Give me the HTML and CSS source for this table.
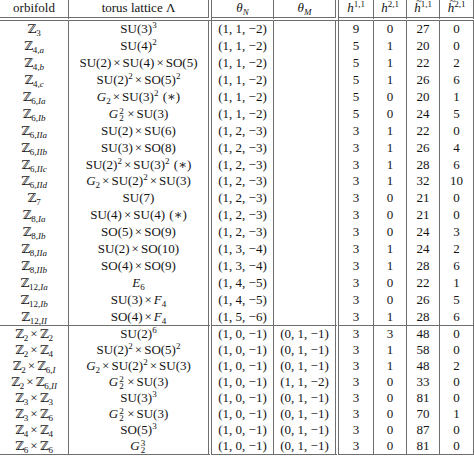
FILE: index.html
```html
<!DOCTYPE html>
<html>
<head>
<meta charset="utf-8">
<link rel="stylesheet" href="styles.css">
</head>
<body>
<table class="orb">
<colgroup>
<col class="w1"><col class="w2"><col class="w3"><col class="w4"><col class="w5"><col class="w6"><col class="w7"><col class="w8">
</colgroup>
<thead>
<tr class="hd">
<th>orbifold</th>
<th>torus lattice Λ</th>
<th><i>θ</i><sub><i>N</i></sub></th>
<th><i>θ</i><sub><i>M</i></sub></th>
<th><i>h</i><sup>1,1</sup></th>
<th><i>h</i><sup>2,1</sup></th>
<th><span class="ht"><i>h</i></span><sup>1,1</sup></th>
<th><span class="ht"><i>h</i></span><sup>2,1</sup></th>
</tr>
</thead>
<tbody class="b1">
<tr><td><span class="bb">ℤ</span><sub>3</sub></td><td>SU(3)<sup>3</sup></td><td>(1, 1, −2)</td><td></td><td>9</td><td>0</td><td>27</td><td>0</td></tr>
<tr><td><span class="bb">ℤ</span><sub>4,<i>a</i></sub></td><td>SU(4)<sup>2</sup></td><td>(1, 1, −2)</td><td></td><td>5</td><td>1</td><td>20</td><td>0</td></tr>
<tr><td><span class="bb">ℤ</span><sub>4,<i>b</i></sub></td><td>SU(2)<span class="x">×</span>SU(4)<span class="x">×</span>SO(5)</td><td>(1, 1, −2)</td><td></td><td>5</td><td>1</td><td>22</td><td>2</td></tr>
<tr><td><span class="bb">ℤ</span><sub>4,<i>c</i></sub></td><td>SU(2)<sup>2</sup><span class="x">×</span>SO(5)<sup>2</sup></td><td>(1, 1, −2)</td><td></td><td>5</td><td>1</td><td>26</td><td>6</td></tr>
<tr><td><span class="bb">ℤ</span><sub>6,<i>Ia</i></sub></td><td><i>G</i><sub>2</sub><span class="x">×</span>SU(3)<sup>2</sup> <span class="st">(∗)</span></td><td>(1, 1, −2)</td><td></td><td>5</td><td>0</td><td>20</td><td>1</td></tr>
<tr><td><span class="bb">ℤ</span><sub>6,<i>Ib</i></sub></td><td><i>G</i><span class="ss"><span class="sp">2</span><span class="sb">2</span></span><span class="x">×</span>SU(3)</td><td>(1, 1, −2)</td><td></td><td>5</td><td>0</td><td>24</td><td>5</td></tr>
<tr><td><span class="bb">ℤ</span><sub>6,<i>IIa</i></sub></td><td>SU(2)<span class="x">×</span>SU(6)</td><td>(1, 2, −3)</td><td></td><td>3</td><td>1</td><td>22</td><td>0</td></tr>
<tr><td><span class="bb">ℤ</span><sub>6,<i>IIb</i></sub></td><td>SU(3)<span class="x">×</span>SO(8)</td><td>(1, 2, −3)</td><td></td><td>3</td><td>1</td><td>26</td><td>4</td></tr>
<tr><td><span class="bb">ℤ</span><sub>6,<i>IIc</i></sub></td><td>SU(2)<sup>2</sup><span class="x">×</span>SU(3)<sup>2</sup> <span class="st">(∗)</span></td><td>(1, 2, −3)</td><td></td><td>3</td><td>1</td><td>28</td><td>6</td></tr>
<tr><td><span class="bb">ℤ</span><sub>6,<i>IId</i></sub></td><td><i>G</i><sub>2</sub><span class="x">×</span>SU(2)<sup>2</sup><span class="x">×</span>SU(3)</td><td>(1, 2, −3)</td><td></td><td>3</td><td>1</td><td>32</td><td>10</td></tr>
<tr><td><span class="bb">ℤ</span><sub>7</sub></td><td>SU(7)</td><td>(1, 2, −3)</td><td></td><td>3</td><td>0</td><td>21</td><td>0</td></tr>
<tr><td><span class="bb">ℤ</span><sub>8,<i>Ia</i></sub></td><td>SU(4)<span class="x">×</span>SU(4) <span class="st">(∗)</span></td><td>(1, 2, −3)</td><td></td><td>3</td><td>0</td><td>21</td><td>0</td></tr>
<tr><td><span class="bb">ℤ</span><sub>8,<i>Ib</i></sub></td><td>SO(5)<span class="x">×</span>SO(9)</td><td>(1, 2, −3)</td><td></td><td>3</td><td>0</td><td>24</td><td>3</td></tr>
<tr><td><span class="bb">ℤ</span><sub>8,<i>IIa</i></sub></td><td>SU(2)<span class="x">×</span>SO(10)</td><td>(1, 3, −4)</td><td></td><td>3</td><td>1</td><td>24</td><td>2</td></tr>
<tr><td><span class="bb">ℤ</span><sub>8,<i>IIb</i></sub></td><td>SO(4)<span class="x">×</span>SO(9)</td><td>(1, 3, −4)</td><td></td><td>3</td><td>1</td><td>28</td><td>6</td></tr>
<tr><td><span class="bb">ℤ</span><sub>12,<i>Ia</i></sub></td><td><i>E</i><sub>6</sub></td><td>(1, 4, −5)</td><td></td><td>3</td><td>0</td><td>22</td><td>1</td></tr>
<tr><td><span class="bb">ℤ</span><sub>12,<i>Ib</i></sub></td><td>SU(3)<span class="x">×</span><i>F</i><sub>4</sub></td><td>(1, 4, −5)</td><td></td><td>3</td><td>0</td><td>26</td><td>5</td></tr>
<tr class="last"><td><span class="bb">ℤ</span><sub>12,<i>II</i></sub></td><td>SO(4)<span class="x">×</span><i>F</i><sub>4</sub></td><td>(1, 5, −6)</td><td></td><td>3</td><td>1</td><td>28</td><td>6</td></tr>
</tbody>
<tbody class="b2">
<tr><td><span class="bb">ℤ</span><sub>2</sub><span class="x">×</span><span class="bb">ℤ</span><sub>2</sub></td><td>SU(2)<sup>6</sup></td><td>(1, 0, −1)</td><td>(0, 1, −1)</td><td>3</td><td>3</td><td>48</td><td>0</td></tr>
<tr><td><span class="bb">ℤ</span><sub>2</sub><span class="x">×</span><span class="bb">ℤ</span><sub>4</sub></td><td>SU(2)<sup>2</sup><span class="x">×</span>SO(5)<sup>2</sup></td><td>(1, 0, −1)</td><td>(0, 1, −1)</td><td>3</td><td>1</td><td>58</td><td>0</td></tr>
<tr><td><span class="bb">ℤ</span><sub>2</sub><span class="x">×</span><span class="bb">ℤ</span><sub>6,<i>I</i></sub></td><td><i>G</i><sub>2</sub><span class="x">×</span>SU(2)<sup>2</sup><span class="x">×</span>SU(3)</td><td>(1, 0, −1)</td><td>(0, 1, −1)</td><td>3</td><td>1</td><td>48</td><td>2</td></tr>
<tr><td><span class="bb">ℤ</span><sub>2</sub><span class="x">×</span><span class="bb">ℤ</span><sub>6,<i>II</i></sub></td><td><i>G</i><span class="ss"><span class="sp">2</span><span class="sb">2</span></span><span class="x">×</span>SU(3)</td><td>(1, 0, −1)</td><td>(1, 1, −2)</td><td>3</td><td>0</td><td>33</td><td>0</td></tr>
<tr><td><span class="bb">ℤ</span><sub>3</sub><span class="x">×</span><span class="bb">ℤ</span><sub>3</sub></td><td>SU(3)<sup>3</sup></td><td>(1, 0, −1)</td><td>(0, 1, −1)</td><td>3</td><td>0</td><td>81</td><td>0</td></tr>
<tr><td><span class="bb">ℤ</span><sub>3</sub><span class="x">×</span><span class="bb">ℤ</span><sub>6</sub></td><td><i>G</i><span class="ss"><span class="sp">2</span><span class="sb">2</span></span><span class="x">×</span>SU(3)</td><td>(1, 0, −1)</td><td>(0, 1, −1)</td><td>3</td><td>0</td><td>70</td><td>1</td></tr>
<tr><td><span class="bb">ℤ</span><sub>4</sub><span class="x">×</span><span class="bb">ℤ</span><sub>4</sub></td><td>SO(5)<sup>3</sup></td><td>(1, 0, −1)</td><td>(0, 1, −1)</td><td>3</td><td>0</td><td>87</td><td>0</td></tr>
<tr class="last"><td><span class="bb">ℤ</span><sub>6</sub><span class="x">×</span><span class="bb">ℤ</span><sub>6</sub></td><td><i>G</i><span class="ss"><span class="sp">3</span><span class="sb">2</span></span></td><td>(1, 0, −1)</td><td>(0, 1, −1)</td><td>3</td><td>0</td><td>81</td><td>0</td></tr>
</tbody>
</table>
</body>
</html>
```
FILE: styles.css
```css
html, body {
  margin: 0;
  padding: 0;
  background: #ffffff;
}
.orb {
  table-layout: fixed;
  width: 474px;
  border-collapse: separate;
  border-spacing: 0;
  font-family: "Liberation Serif", "DejaVu Serif", serif;
  font-size: 13px;
  color: #141414;
}
.w1 { width: 69px; }
.w2 { width: 143px; }
.w3 { width: 62px; }
.w4 { width: 65px; }
.w5 { width: 35px; }
.w6 { width: 33px; }
.w7 { width: 33px; }
.w8 { width: 34px; }
.orb th, .orb td {
  box-sizing: border-box;
  padding: 0;
  text-align: center;
  vertical-align: middle;
  white-space: nowrap;
  line-height: 12px;
  font-weight: normal;
  border-right: 1px solid #6e6e6e;
}
.orb th:nth-child(2), .orb td:nth-child(2),
.orb th:nth-child(4), .orb td:nth-child(4) {
  border-right: 4px double #6e6e6e;
}
.orb th {
  height: 21px;
  padding-bottom: 1px;
  border-bottom: 4px double #6e6e6e;
}
.b1 td { height: 16.9px; }
.b1 .last td { height: 17.9px; border-bottom: 1px solid #6e6e6e; }
.b2 td { height: 16px; }
.b2 .last td { height: 17px; border-bottom: 1px solid #6e6e6e; }
.bb {
  font-family: "DejaVu Serif", serif;
  font-size: 12px;
  line-height: 0;
  font-weight: normal;
}
.orb sub, .orb sup {
  font-size: 9px;
  line-height: 0;
}
.orb sub { vertical-align: -3px; }
.orb sup { vertical-align: 5px; }
.x { margin: 0 2px; }
.st { margin-left: 1px; }
.ss {
  position: relative;
  display: inline-block;
  width: 6px;
  height: 1px;
  margin-left: 1px;
  font-size: 9px;
  line-height: 9px;
}
.sp, .sb {
  position: absolute;
  left: 0;
}
.sp { top: -10px; }
.sb { top: -3px; }
.ht {
  position: relative;
  display: inline-block;
}
.ht::after {
  content: "~";
  position: absolute;
  left: 2px;
  top: -7px;
  font-size: 10px;
  font-style: normal;
}
```
